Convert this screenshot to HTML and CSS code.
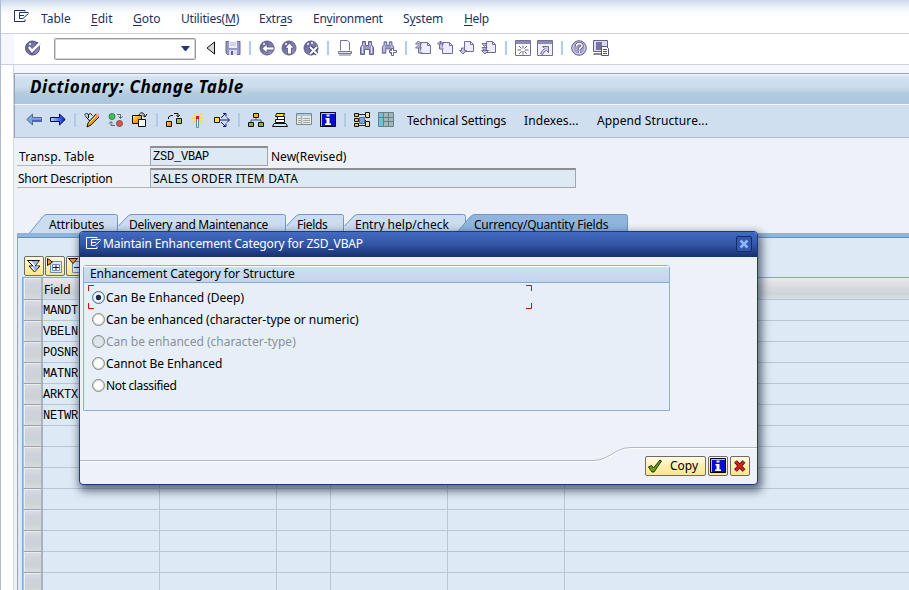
FILE: index.html
```html
<!DOCTYPE html>
<html lang="en">

<head>
    <meta charset="UTF-8">
    <meta name="viewport" content="width=device-width, initial-scale=1.0">
    <title>Dictionary: Change Table</title>
    <link rel="stylesheet" href="styles.css">
</head>

<body>
    <svg class="defs" width="0" height="0">
        <defs>
            <linearGradient id="ball" x1="0" y1="0" x2="1" y2="1">
                <stop offset="0" stop-color="#5c5b91" />
                <stop offset="1" stop-color="#9b99c5" />
            </linearGradient>
            <linearGradient id="orange" x1="0" y1="0" x2="1" y2="1">
                <stop offset="0" stop-color="#ffe9a0" />
                <stop offset=".5" stop-color="#f9a11c" />
                <stop offset="1" stop-color="#e08a00" />
            </linearGradient>
            <linearGradient id="arrow">
                <stop offset="0" stop-color="#a8e4ff" />
                <stop offset="1" stop-color="#0018e8" />
            </linearGradient>
            <symbol id="menu" viewBox="0 0 16 13">
                <path d="M11 1.500V.5H.5v11H11V9.500M14.500 2.500h-9v6H9L14.500 3.500M6 5.500h4" fill="none" stroke="currentColor" />
            </symbol>
            <symbol id="enter" viewBox="0 0 16 16">
                <circle cx="7.500" cy="8" r="7" fill="url(#ball)" stroke="#55547e" />
                <path d="M4 7l3 5 7-9" fill="none" stroke="#55547e" stroke-width="4" />
                <path d="M4 7l3 4 8-8" fill="none" stroke="#fff" stroke-width="2.500" />
                <path d="M4 3h2v2H4z" fill="#d8d8f0" />
            </symbol>
            <symbol id="save" viewBox="0 0 16 16">
                <path d="M1 1.500h14v13H2.500L1 13z" fill="#9997c5" stroke="#68668f" />
                <path d="M4 1h8v7H4z" fill="#ececfc" />
                <path d="M4 10h8v5H4z" fill="#dcdcf2" />
                <path d="M6 11h2v4H6z" fill="#605e8c" />
                <path d="M5 3h6M5 5h6" stroke="#b8b8de" />
            </symbol>
            <symbol id="back" viewBox="0 0 16 16">
                <circle cx="8" cy="8" r="7" fill="url(#ball)" stroke="#605f8c" />
                <path d="M3 8.500l5-4.500v3h7v3H8v3z" fill="#fff" stroke="#55547e" stroke-width=".8" />
                <path d="M4 3h2v2H4z" fill="#d8d8f0" />
            </symbol>
            <symbol id="exit" viewBox="0 0 16 16">
                <circle cx="8" cy="8" r="7" fill="url(#ball)" stroke="#605f8c" />
                <path d="M8.500 3l4.500 5h-2.500v6h-4V8H4z" fill="#fff" stroke="#55547e" stroke-width=".8" />
                <path d="M4 3h2v2H4z" fill="#d8d8f0" />
            </symbol>
            <symbol id="cancel" viewBox="0 0 16 16">
                <circle cx="8" cy="8" r="7" fill="url(#ball)" stroke="#605f8c" />
                <path d="M7 7l7 7M14 7l-7 7" stroke="#48476f" stroke-width="4" />
                <path d="M7 7l7 7M14 7l-7 7" stroke="#fff" stroke-width="2" />
                <path d="M4 3h2v2H4zM8 2h2v2H8z" fill="#d8d8f0" />
            </symbol>
            <symbol id="print" viewBox="0 0 16 16">
                <path d="M3.500 10.500v-10h7l2 2v8" fill="#fff" stroke="#77759c" />
                <path d="M1.500 11.500h13v2h-13z" fill="#e0e0f4" stroke="#77759c" />
                <path d="M2 15h12" stroke="#77759c" />
            </symbol>
            <symbol id="find" viewBox="0 0 16 16">
                <path d="M3.500 1.500h3v4h3v-4h3v3l2 3v7h-4v-5h-5v5h-4v-7l2-3z" fill="#9a98c6" stroke="#62608c" />
                <path d="M3.500 6v7M12.500 6v7M5 3v2M11 3v2" stroke="#e4e4fa" />
            </symbol>
            <symbol id="findnext" viewBox="0 0 16 16">
                <use href="#find" width="14" height="15" />
                <path d="M10.500 8.500h2v2h3v2h-3v3h-2v-3h-2v-2h2z" fill="#fff" stroke="#62608c" />
            </symbol>
            <symbol id="sheet" viewBox="0 0 16 16">
                <path d="M5.500 2.500h7l3 3v8h-10z" fill="#ececfd" stroke="#706e98" />
                <path d="M12.500 2.500v3h3" fill="none" stroke="#706e98" />
            </symbol>
            <symbol id="first" viewBox="0 0 16 16">
                <use href="#sheet" />
                <path d="M3.500 1l-3 3h6zM3.500 5l-3 3h6zM3.500 8v5h4" fill="#c4c4e8" stroke="#706e98" />
            </symbol>
            <symbol id="prev" viewBox="0 0 16 16">
                <use href="#sheet" />
                <path d="M3.500 1l-3 3h2v5h4" fill="#c4c4e8" stroke="#706e98" />
                <path d="M3.500 1l3 3h-3z" fill="#c4c4e8" stroke="#706e98" />
            </symbol>
            <symbol id="next" viewBox="0 0 16 16">
                <path d="M5.500 1.500h6l3 3v7h-9zM11.500 1.500v3h3" fill="#ececfd" stroke="#706e98" />
                <path d="M4 14L.500 10.500h2V8h3v2.500h2z" fill="#c4c4e8" stroke="#706e98" />
            </symbol>
            <symbol id="last" viewBox="0 0 16 16">
                <path d="M5.500 1.500h6l3 3v8h-9zM11.500 1.500v3h3" fill="#ececfd" stroke="#706e98" />
                <path d="M1 3.500h5l-2.500 3zM4 14L.500 10.500h7zM1 7.500h5l-2.500 3z" fill="#c4c4e8" stroke="#706e98" />
            </symbol>
            <symbol id="session" viewBox="0 0 16 16">
                <path d="M.5.500h15v15H.500z" fill="#fff" stroke="#706e98" />
                <path d="M1 1h14v3H1z" fill="#8c8ab5" />
                <path d="M8 5.500v3M8 11v3.500M2.500 10H6M10 10h3.500M4 6l2.500 2.500M12 6L9.500 8.500M4 14l2.500-2.500M12 14l-2.500-2.500" stroke="#605e88" />
            </symbol>
            <symbol id="shortcut" viewBox="0 0 16 16">
                <path d="M.5.500h15v15H.500z" fill="#f0f0fb" stroke="#706e98" />
                <path d="M1 1h14v3H1z" fill="#8c8ab5" />
                <path d="M5.500 6.500h6v6l-2-2-2 1-2 3-2-1 2-3 2-2z" fill="#c8c8e8" stroke="#706e98" />
            </symbol>
            <symbol id="help" viewBox="0 0 16 16">
                <circle cx="8" cy="8" r="7.300" fill="#a4a3cb" stroke="#68668f" />
                <circle cx="8" cy="8" r="6" fill="none" stroke="#d4d4ee" />
                <path d="M5.500 6.500c0-4 6-3.500 5.500-.5-.3 1.500-2.500 1.500-2.500 3.500M8.500 11v2" fill="none" stroke="#57557f" stroke-width="3.200" />
                <path d="M5.500 6.500c0-4 6-3.500 5.500-.5-.3 1.500-2.500 1.500-2.500 3.500M8.500 11v2" fill="none" stroke="#fff" stroke-width="1.600" />
            </symbol>
            <symbol id="layout" viewBox="0 0 16 16">
                <path d="M.5.500h14v11H.500z" fill="#dadaf0" stroke="#62608c" />
                <path d="M3 2h6v8H3z" fill="#77759f" />
                <path d="M1 13h8v2H0z" fill="#8583ab" />
                <path d="M8.500 6.500h5l2 2v7h-7z" fill="#fff" stroke="#55547e" />
                <path d="M10 9.500h4M10 11.500h4M10 13.500h4" stroke="#55547e" />
            </symbol>
            <symbol id="left" viewBox="0 0 16 16">
                <path d="M.8 7.500L6.500 2v3.500h9v4h-9V13z" fill="#75a9e4" stroke="#5d6580" />
                <path d="M6 8.500h9" stroke="#4662d0" stroke-width="1.500" />
            </symbol>
            <symbol id="right" viewBox="0 0 16 16">
                <path d="M15.200 7.500L9.500 2v3.500h-9v4h9V13z" fill="url(#arrow)" stroke="#000850" />
            </symbol>
            <symbol id="toggle" viewBox="0 0 16 16">
                <path d="M.5 3l2-2 2 2M4.500 6V2.500l2-1 2 2M1 3.500l5 6" fill="none" stroke="#111" />
                <path d="M12 2l3 3-8 8-4 2 1-4z" fill="#f59a14" stroke="#111" />
                <path d="M12 4l-7 7" stroke="#fff0a0" />
                <path d="M12.500 1.500l2.500 3" stroke="#f59ab0" stroke-width="2" />
            </symbol>
            <symbol id="active" viewBox="0 0 16 16">
                <circle cx="4" cy="4.500" r="3" fill="#3cc35c" stroke="#34804a" />
                <circle cx="11.500" cy="11.500" r="3" fill="#d05858" stroke="#8d4747" />
                <path d="M9 2.500h3.500V6M10.500 4.500l2 2 2-2M7 13.500H3V10M1 11.500l2-2 2 2" fill="none" stroke="#5b6670" />
            </symbol>
            <symbol id="other" viewBox="0 0 16 16">
                <path d="M.5 3.500h9v8h-9z" fill="url(#orange)" stroke="#111" />
                <path d="M6.500 7.500h7v7h-7z" fill="#f2f6ff" stroke="#111" />
                <path d="M7 3c1-3 5-3 6 1M10.500 3l2.500 2 2-3" fill="none" stroke="#111" />
            </symbol>
            <symbol id="check" viewBox="0 0 16 16">
                <path d="M.5 9.500h5v5h-5z" fill="url(#orange)" stroke="#111" />
                <path d="M10.500 6.500h5v5h-5z" fill="#a0c342" stroke="#111" />
                <path d="M2.500 7V5L5 3.500h2M8 1.500h4V4M10.500 3l1.500 2L14 3" fill="none" stroke="#111" />
            </symbol>
            <symbol id="wand" viewBox="0 0 16 16">
                <path d="M3 1l3 3M12 1L9 4M2 6h3M10 6h4M3 11l3-3M12 11L9 8M7.500 0v2" stroke="#f5e51c" stroke-width="1.400" />
                <path d="M6.500 7v8.500h2V7" fill="#eff6f8" stroke="#60889a" />
                <path d="M6 4h3v3H6z" fill="#f20d0d" />
            </symbol>
            <symbol id="where" viewBox="0 0 16 16">
                <path d="M.5 5.500h5v5h-5z" fill="#ffe42c" stroke="#111" />
                <path d="M6 8h9M7 6l4-4M7 10l4 4M9 1.500h3v3M9 14.500h3v-3M13 5.500L15.500 8 13 10.500" fill="none" stroke="#12128a" />
            </symbol>
            <symbol id="tree" viewBox="0 0 16 16">
                <path d="M8 5v3M3 11V8h10v3" fill="none" stroke="#555" />
                <path d="M5.500 1.500h5v4h-5z" fill="#f5ad25" stroke="#111" />
                <path d="M.5 10.500h5v4h-5zM10.500 10.500h5v4h-5z" fill="#90b63a" stroke="#111" />
            </symbol>
            <symbol id="stack" viewBox="0 0 16 16">
                <path d="M4.500 1.500h8l-1 3h-8z" fill="#fbe42a" stroke="#111" />
                <path d="M5.500 4.500h7v3h-7zM3.500 7.500h9v3h-9z" fill="#fff" stroke="#111" />
                <path d="M2 11.500h12l1.500 3H.500z" fill="#c5e5ff" stroke="#111" />
            </symbol>
            <symbol id="list" viewBox="0 0 16 16">
                <path d="M.5 1.500h15v11H.500z" fill="#e4e8dd" stroke="#7d8888" />
                <path d="M1 2h14v2H1z" fill="#9fcce4" />
                <path d="M2 6.500h3M2 8.500h3M2 10.500h3M7 6.500h7M7 8.500h7M7 10.500h7M5.500 4v8" stroke="#a5abab" />
            </symbol>
            <symbol id="info" viewBox="0 0 16 16">
                <path d="M.5.500h15v14H.500z" fill="#0c0ccf" stroke="#000" />
                <path d="M1.500 14V1.500H15" fill="none" stroke="#9cc8ff" />
                <path d="M6.500 2.500h3v2h-3zM5.500 6h4v5.500H11V13H5v-1.500h1.500v-4h-1z" fill="#fff" />
            </symbol>
            <symbol id="graph" viewBox="0 0 16 16">
                <path d="M4 2.500h8M4 8.500h3M4 13.500h8M9 8.500h3" stroke="#222" />
                <path d="M.5 1.500h4v3h-4zM.500 6.500h4v3h-4zM.500 11.500h4v3h-4z" fill="#f2bd4a" stroke="#111" />
                <path d="M5.500 5.500h5v6h-5z" fill="#7fa6da" stroke="#50709c" />
                <path d="M11.500.500h4v5h-4zM11.500 9.500h4v5h-4z" fill="#eee2a4" stroke="#111" />
            </symbol>
            <symbol id="contents" viewBox="0 0 16 16">
                <path d="M.5.500h15v14H.500z" fill="#a0b9b8" stroke="#687f83" />
                <path d="M1 1h4v13H1z" fill="#6fc2da" />
                <path d="M5.500 1v13M10.500 1v13M1 5.500h14M5 9.500h10" stroke="#687f83" />
            </symbol>
            <symbol id="expand" viewBox="0 0 16 16">
                <path d="M1.500 2.500h12L9 8l5 0-5.500 6L3 8h4z" fill="#fff" stroke="#111" />
                <path d="M6 8h7l-4 5zM5 3h7L9 7z" fill="#8fb8e4" />
            </symbol>
            <symbol id="insert" viewBox="0 0 16 16">
                <path d="M3.500 3.500h11v11h-11z" fill="#dceaff" stroke="#7189a8" />
                <path d="M5.500 6.500h7v6h-7z" fill="#fff" stroke="#7189a8" />
                <path d="M.5.500v7l5-3.500z" fill="#ff9b13" stroke="#111" />
                <path d="M6 9.500h6M9 7v5" stroke="#00a" />
            </symbol>
            <symbol id="delete" viewBox="0 0 16 16">
                <path d="M4.500 3.500h11v11h-11z" fill="#dceaff" stroke="#7189a8" />
                <path d="M.5.500h9l-4.500 5z" fill="#ff9b13" stroke="#111" />
                <path d="M6 9.500h6" stroke="#00a" />
            </symbol>
            <symbol id="ok" viewBox="0 0 16 16">
                <path d="M1.500 9l3-1.500 2 2.500L13 2l1.500 1L7 14H5z" fill="#69a414" stroke="#1a2e08" />
            </symbol>
            <symbol id="cross" viewBox="0 0 14 14">
                <path d="M2.500 2.500L11 11.500M11 2.500L2.500 11.500" stroke="#301010" stroke-width="4" />
                <path d="M2.500 2.500L11 11.500M11 2.500L2.500 11.500" stroke="#e41a1a" stroke-width="2.400" />
            </symbol>
        </defs>
    </svg>

    <div class="window">
        <nav class="menubar">
            <svg class="menu-icon"><use href="#menu" /></svg>
            <span class="m-table">Table</span>
            <span class="m-edit"><u>E</u>dit</span>
            <span class="m-goto"><u>G</u>oto</span>
            <span class="m-util">Utilities(<u>M</u>)</span>
            <span class="m-extras">Extr<u>a</u>s</span>
            <span class="m-env">En<u>v</u>ironment</span>
            <span class="m-system">S<u>y</u>stem</span>
            <span class="m-help"><u>H</u>elp</span>
        </nav>

        <div class="toolbar">
            <svg class="icon"><use href="#enter" /></svg>
            <div class="command"><i></i></div>
            <svg class="collapse" viewBox="0 0 9 14"><path d="M8.500 1v12L1 7z" fill="#d8d8d8" stroke="#111" /></svg>
            <svg class="icon"><use href="#save" /></svg>
            <b class="sep"></b>
            <svg class="icon"><use href="#back" /></svg>
            <svg class="icon"><use href="#exit" /></svg>
            <svg class="icon"><use href="#cancel" /></svg>
            <b class="sep"></b>
            <svg class="icon"><use href="#print" /></svg>
            <svg class="icon"><use href="#find" /></svg>
            <svg class="icon"><use href="#findnext" /></svg>
            <b class="sep"></b>
            <svg class="icon"><use href="#first" /></svg>
            <svg class="icon"><use href="#prev" /></svg>
            <svg class="icon"><use href="#next" /></svg>
            <svg class="icon"><use href="#last" /></svg>
            <b class="sep"></b>
            <svg class="icon"><use href="#session" /></svg>
            <svg class="icon"><use href="#shortcut" /></svg>
            <b class="sep"></b>
            <svg class="icon"><use href="#help" /></svg>
            <svg class="icon"><use href="#layout" /></svg>
        </div>

        <main class="content">
            <h1>Dictionary: Change Table</h1>
            <div class="app-toolbar">
                <svg class="icon"><use href="#left" /></svg>
                <svg class="icon"><use href="#right" /></svg>
                <b class="sep"></b>
                <svg class="icon"><use href="#toggle" /></svg>
                <svg class="icon"><use href="#active" /></svg>
                <svg class="icon"><use href="#other" /></svg>
                <b class="sep"></b>
                <svg class="icon"><use href="#check" /></svg>
                <svg class="icon"><use href="#wand" /></svg>
                <svg class="icon"><use href="#where" /></svg>
                <b class="sep"></b>
                <svg class="icon"><use href="#tree" /></svg>
                <svg class="icon"><use href="#stack" /></svg>
                <svg class="icon"><use href="#list" /></svg>
                <svg class="icon"><use href="#info" /></svg>
                <b class="sep"></b>
                <svg class="icon"><use href="#graph" /></svg>
                <svg class="icon"><use href="#contents" /></svg>
                <span class="tech">Technical Settings</span>
                <span class="indexes">Indexes...</span>
                <span class="append">Append Structure...</span>
            </div>

            <div class="form">
                <div class="row">
                    <label>Transp. Table</label>
                    <div class="field name">ZSD_VBAP</div>
                    <span class="status">New(Revised)</span>
                </div>
                <div class="row">
                    <label class="short-label">Short Description</label>
                    <div class="field desc">SALES ORDER ITEM DATA</div>
                </div>
            </div>

            <div class="tabs">
                <div class="tab t1"><svg viewBox="0 0 89 19"><path d="M.5 19L14 2.500Q15.500.500 18 .500H86.500Q88.500.500 88.500 2.500V19" /></svg><span>Attributes</span></div>
                <div class="tab t2"><svg viewBox="0 0 168 19"><path d="M.5 12L9 3Q11 .500 14 .500H165.500Q167.500.500 167.500 2.500V19H.500" /></svg><span>Delivery and Maintenance</span></div>
                <div class="tab t3"><svg viewBox="0 0 58 19"><path d="M.5 12L9 3Q11 .500 14 .500H55.500Q57.500.500 57.500 2.500V19H.500" /></svg><span>Fields</span></div>
                <div class="tab t4"><svg viewBox="0 0 122 19"><path d="M.5 12L9 3Q11 .500 14 .500H119.500Q121.500.500 121.500 2.500V19H.500" /></svg><span>Entry help/check</span></div>
                <div class="tab t5 current"><svg viewBox="0 0 172 19"><path d="M.5 19L14 3Q16 .500 19 .500H169.500Q171.500.500 171.500 2.500V19" /></svg><span>Currency/Quantity Fields</span></div>
            </div>

            <section class="panel">
                <div class="grid-buttons">
                    <button><svg class="icon"><use href="#expand" /></svg></button>
                    <button><svg class="icon"><use href="#insert" /></svg></button>
                    <button><svg class="icon"><use href="#delete" /></svg></button>
                </div>
                <table>
                    <colgroup>
                        <col class="c-sel"><col class="c-wide"><col class="c-wide"><col class="c-small"><col class="c-wide"><col class="c-wide"><col>
                    </colgroup>
                    <tr><th></th><th colspan="6">Field</th></tr>
                    <tr><td></td><td>MANDT</td><td></td><td></td><td></td><td></td><td></td></tr>
                    <tr><td></td><td>VBELN</td><td></td><td></td><td></td><td></td><td></td></tr>
                    <tr><td></td><td>POSNR</td><td></td><td></td><td></td><td></td><td></td></tr>
                    <tr><td></td><td>MATNR</td><td></td><td></td><td></td><td></td><td></td></tr>
                    <tr><td></td><td>ARKTX</td><td></td><td></td><td></td><td></td><td></td></tr>
                    <tr><td></td><td>NETWR</td><td></td><td></td><td></td><td></td><td></td></tr>
                    <tr><td></td><td></td><td></td><td></td><td></td><td></td><td></td></tr>
                    <tr><td></td><td></td><td></td><td></td><td></td><td></td><td></td></tr>
                    <tr><td></td><td></td><td></td><td></td><td></td><td></td><td></td></tr>
                    <tr><td></td><td></td><td></td><td></td><td></td><td></td><td></td></tr>
                    <tr><td></td><td></td><td></td><td></td><td></td><td></td><td></td></tr>
                    <tr><td></td><td></td><td></td><td></td><td></td><td></td><td></td></tr>
                    <tr><td></td><td></td><td></td><td></td><td></td><td></td><td></td></tr>
                    <tr><td></td><td></td><td></td><td></td><td></td><td></td><td></td></tr>
                </table>
            </section>
        </main>
    </div>

    <div class="dialog">
        <header>
            <svg class="menu-icon"><use href="#menu" /></svg>
            <span class="caption">Maintain Enhancement Category for ZSD_VBAP</span>
            <div class="close"><svg viewBox="0 0 10 10"><path d="M1.500 1.500l7 7M8.500 1.500l-7 7" stroke="#91b3ff" stroke-width="2.600" /></svg></div>
        </header>
        <div class="group">
            <h2>Enhancement Category for Structure</h2>
            <div class="option focus"><i class="radio on"></i><span class="o1">Can Be Enhanced (Deep)</span>
                <svg class="corners" viewBox="0 0 444 24"><path d="M.5 6V.500H6M438 .500h5.500V6M443.500 18v5.500H438M6 23.500H.500V18" fill="none" stroke="#e00000" /></svg>
            </div>
            <div class="option"><i class="radio"></i><span class="o2">Can be enhanced (character-type or numeric)</span></div>
            <div class="option disabled"><i class="radio"></i><span class="o3">Can be enhanced (character-type)</span></div>
            <div class="option"><i class="radio"></i><span class="o4">Cannot Be Enhanced</span></div>
            <div class="option"><i class="radio"></i><span class="o5">Not classified</span></div>
        </div>
        <footer>
            <svg class="curve" viewBox="0 0 677 16">
                <path d="M0 14.500H513C530 14.500 534 1.500 551 1.500H677" fill="none" stroke="#fff" />
                <path d="M0 13.500H513C530 13.500 534 .500 551 .500H677" fill="none" stroke="#a9bacb" />
            </svg>
            <div class="actions">
                <button class="copy"><svg class="icon"><use href="#ok" /></svg><span>Copy</span></button>
                <button><svg class="icon"><use href="#info" /></svg></button>
                <button><svg class="icon small"><use href="#cross" /></svg></button>
            </div>
        </footer>
    </div>
</body>

</html>
```
FILE: styles.css
```css
* {
    box-sizing: border-box;
}

body {
    margin: 0;
    width: 909px;
    height: 590px;
    overflow: hidden;
    position: relative;
    font: 12px/16px "Noto Sans", "Open Sans", sans-serif;
    color: #000;
    background-color: #fff;
}

svg {
    display: block;
    flex: none;
}

span,
label {
    white-space: nowrap;
}

.window {
    height: 590px;
    overflow: hidden;
    border-left: 1px solid #aebccf;
}

.icon {
    width: 16px;
    height: 16px;
}

.menu-icon {
    width: 16px;
    height: 13px;
}

/* menu */
.menubar {
    display: flex;
    height: 34px;
    padding: 10px 0 0 13px;
    color: #1c325f;
    background: linear-gradient(#cbd8ec, #eff3fa 8px, #fff 14px);
    border-bottom: 1px solid #ccd0dc;
}

.menubar .menu-icon {
    margin-right: 11px;
}

.menubar span {
    padding-top: 1px;
}

.m-table { width: 50px; }
.m-edit { width: 42px; }
.m-goto { width: 48px; }
.m-util { width: 78px; letter-spacing: -.2px; }
.m-extras { width: 54px; letter-spacing: -.2px; }
.m-env { width: 90px; letter-spacing: -.25px; }
.m-system { width: 61px; letter-spacing: -.1px; }
.m-help { letter-spacing: -.3px; }

u {
    text-underline-offset: 2px;
}

/* standard toolbar */
.toolbar {
    display: flex;
    align-items: center;
    height: 31px;
    padding: 0 0 3px 24px;
    gap: 6px;
    background: linear-gradient(90deg, #f6f7fe 13px, #fff 13px);
    border-bottom: 1px solid #ccd0dc;
}

.command {
    width: 142px;
    height: 22px;
    margin: 2px 4px 0 7px;
    padding: 7px 5px;
    border: 1px solid #999;
    border-radius: 2px;
    box-shadow: inset 0 0 0 1px #d6d6d6;
    background-color: #fff;
}

.command i {
    display: block;
    margin-left: auto;
    width: 9px;
    border: solid transparent;
    border-width: 5px 4.5px 0;
    border-top-color: #1e3868;
}

.collapse {
    width: 9px;
    height: 14px;
    margin-right: 4px;
}

.sep {
    width: 2px;
    height: 14px;
    background-color: #b1cbe6;
}

.toolbar .sep {
    margin: 0 2px;
}

/* work area */
.content {
    height: 525px;
    padding-top: 8px;
    margin-left: 12px;
    border-left: 1px solid #d3d7e0;
    background: linear-gradient(#f5f6fe 8px, #eef1f7 8px);
}

h1 {
    margin: 0;
    height: 32px;
    padding: 1px 0 0 15px;
    font: italic bold 17px/24px "Noto Sans", sans-serif;
    letter-spacing: .58px;
    border-top: 1px solid #94a3bd;
    border-left: 1px solid #94a3bd;
    border-bottom: 1px solid #f3f7fa;
    background: linear-gradient(#f3f6fb, #d2e1ef 3px, #cbdeee 12px, #b3cbdd 20px, #acc5e2);
}

.app-toolbar {
    display: flex;
    align-items: center;
    height: 33px;
    padding: 0 0 2px 11px;
    gap: 8px;
    background-color: #cfdfef;
    border-left: 1px solid #94a3bd;
    border-bottom: 1px solid #a7b9cd;
}

.app-toolbar span {
    padding-top: 2px;
}

.tech {
    margin-left: 5px;
    width: 109px;
    letter-spacing: -.08px;
}

.indexes {
    width: 65px;
    letter-spacing: .1px;
}

.append {
    letter-spacing: .1px;
}

.form {
    padding: 8px 0 0 3px;
    height: 76px;
}

.row {
    display: flex;
    height: 20px;
    margin-bottom: 2px;
    line-height: 22px;
}

label {
    width: 133px;
    padding-left: 2px;
    letter-spacing: .1px;
    border-bottom: 1px solid #b5b5b5;
}

.short-label {
    padding-left: 1px;
    letter-spacing: -.22px;
}

.field {
    height: 20px;
    padding-left: 2px;
    line-height: 18px;
    border: 1px solid #a5a5a5;
    border-top: 2px solid #8f8f8f;
    background-color: #dde9f5;
    white-space: nowrap;
}

.name {
    width: 118px;
    font: 12px/18px "Liberation Mono", monospace;
    letter-spacing: -.2px;
}

.desc {
    width: 426px;
    letter-spacing: .24px;
}

.status {
    margin-left: 3px;
}

.tabs {
    display: flex;
    height: 19px;
    padding-left: 15px;
}

.tab {
    display: grid;
    height: 19px;
    flex: none;
}

.tab svg,
.tab span {
    grid-area: 1 / 1;
}

.tab svg {
    height: 19px;
    fill: #cbddef;
    stroke: #6f99c4;
}

.tab span {
    line-height: 22px;
}

.current svg {
    fill: #8fb5de;
}

.t1 { width: 89px; }
.t1 span { padding-left: 20px; letter-spacing: -.1px; }
.t2 { width: 168px; }
.t2 span { padding-left: 11px; letter-spacing: -.32px; }
.t3 { width: 58px; }
.t3 span { padding-left: 11px; letter-spacing: -.3px; }
.t4 { width: 122px; }
.t4 span { padding-left: 11px; }
.t5 { width: 172px; margin-left: -10px; }
.t5 span { padding-left: 18px; letter-spacing: -.22px; }

.panel {
    height: 358px;
    margin-left: 3px;
    padding: 19px 0 0 4px;
    border-left: 1px solid #82a7d0;
    border-top: 4px solid #91b5da;
    box-shadow: inset 0 1px #6391bd;
    background-color: #dde9f5;
}

.grid-buttons {
    display: flex;
    gap: 1px;
    padding-left: 2px;
    height: 21px;
}

button {
    display: flex;
    align-items: center;
    justify-content: center;
    width: 20px;
    height: 20px;
    padding: 0;
    font: inherit;
    color: #000;
    border: 1px solid #6f6c64;
    border-radius: 2px;
    background: linear-gradient(#fffae6, #ffefae 50%, #fbe58c);
}

table {
    width: 897px;
    table-layout: fixed;
    border-collapse: separate;
    border-spacing: 0;
    border-top: 1px solid #82a7d0;
    border-left: 1px solid #82a7d0;
}

.c-sel { width: 20px; }
.c-wide { width: 117px; }
.c-small { width: 54px; }

th {
    height: 22px;
    padding: 2px 0 0 1px;
    text-align: left;
    font-weight: normal;
    line-height: 16px;
    border-bottom: 1px solid #b9c5d0;
    background: linear-gradient(#e9eaee, #e1dfe4 25%, #cdd5da 75%, #d9dde6);
}

td {
    height: 21px;
    padding: 2px 0 0;
    font: 12px/18px "Liberation Mono", monospace;
    letter-spacing: -.2px;
    border-right: 1px solid #b8c7d4;
    border-bottom: 1px solid #b8c7d4;
}

td:first-child,
th:first-child {
    border-left: 1px solid #b6c1cf;
    border-right: 2px solid #a9b2bf;
    border-bottom: 1px solid #9ca1ad;
    box-shadow: inset 1px 1px #ecedf0;
    background: linear-gradient(#d9dcdf, #cfd2db 35%, #cbd3d6 70%, #d7dcde);
}

/* dialog */
.dialog {
    position: absolute;
    left: 79px;
    top: 231px;
    width: 679px;
    height: 254px;
    display: flex;
    flex-direction: column;
    border: 1px solid #1c3b7a;
    border-radius: 4px;
    background-color: #eef1f7;
    box-shadow: 2px 4px 8px 2px rgba(30, 40, 65, .65);
    overflow: hidden;
}

.dialog header {
    display: flex;
    align-items: center;
    height: 25px;
    flex: none;
    padding: 0 5px 2px 6px;
    color: #fff;
    background: linear-gradient(#4469c4, #3558a8 45%, #203e84 80%, #162f6c);
}

.caption {
    margin-left: 1px;
    letter-spacing: -.12px;
}

.close {
    display: flex;
    align-items: center;
    justify-content: center;
    margin-left: auto;
    width: 16px;
    height: 16px;
    border: 1px solid #142c65;
    border-radius: 2px;
    background-color: #3158ac;
}

.close svg {
    width: 10px;
    height: 10px;
}

.group {
    width: 587px;
    height: 146px;
    flex: none;
    margin: 8px 0 0 3px;
    border: 1px solid #8eafd4;
    border-radius: 3px 3px 0 0;
    background-color: #e6eff7;
}

h2 {
    margin: 0 0 3px;
    height: 17px;
    padding-left: 6px;
    font: 12px/16px "Noto Sans", sans-serif;
    letter-spacing: -.07px;
    border-bottom: 1px solid #88a9cd;
    background: linear-gradient(#fff 1px, #cddff0 1px, #c4d5ed);
}

.option {
    display: flex;
    align-items: center;
    height: 22px;
    padding-left: 8px;
}

.option span {
    padding-top: 2px;
}

.o2,
.o4 {
    letter-spacing: -.05px;
}

.o5 {
    letter-spacing: -.35px;
}

.radio {
    width: 13px;
    height: 13px;
    margin-right: 1px;
    border: 1px solid #888;
    border-radius: 50%;
    box-shadow: inset 0 0 0 1px #d5d5d5;
    background-color: #fff;
}

.on {
    border-color: #3c6fa8;
    background: radial-gradient(#24304f 2.4px, #fff 3.2px);
}

.disabled {
    color: #8b8f99;
}

.disabled .radio {
    background-color: #dce6ef;
}

.focus {
    position: relative;
}

.corners {
    position: absolute;
    left: 4px;
    top: -1px;
    width: 444px;
    height: 24px;
}

footer {
    margin-top: auto;
    height: 37px;
}

.curve {
    width: 677px;
    height: 16px;
}

.actions {
    display: flex;
    justify-content: flex-end;
    gap: 2px;
    margin-top: -7px;
    padding-right: 7px;
}

.copy {
    width: 61px;
    justify-content: flex-start;
    padding-left: 1px;
}

.copy span {
    margin-left: 7px;
}

.actions .small {
    width: 14px;
    height: 14px;
}

.defs {
    position: absolute;
}
```
